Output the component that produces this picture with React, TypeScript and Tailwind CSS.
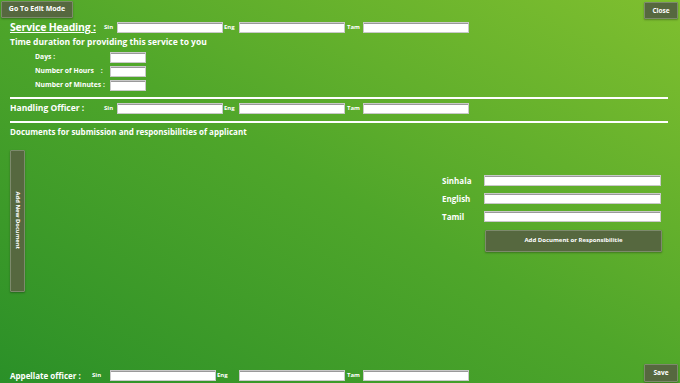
import React from 'react'

const font = { fontFamily: '"Open Sans", "Noto Sans", sans-serif' }

function Field({ w }: { w: string }) {
  return <input type="text" className={`${w} h-[11px] bg-white border border-[#c9c9c9] shadow-[inset_0_1px_0_#999] outline-none`} />
}

function LangRow({
  label,
  labelW,
  labelClass,
  sinW,
  engW,
}: {
  label: React.ReactNode
  labelW: string
  labelClass: string
  sinW: string
  engW: string
}) {
  return (
    <div className="flex items-center pl-[10px]">
      <div className={`${labelW} ${labelClass} text-white font-bold leading-none whitespace-nowrap`}>{label}</div>
      <span className={`${sinW} text-[6px] font-bold text-white`}>Sin</span>
      <Field w="w-[106px]" />
      <span className={`${engW} pl-[1px] text-[6px] font-bold text-white`}>Eng</span>
      <Field w="w-[106px]" />
      <span className="w-[18px] pl-[2px] text-[6px] font-bold text-white">Tam</span>
      <Field w="w-[106px]" />
    </div>
  )
}

function Duration({ label }: { label: string }) {
  return (
    <div className="flex items-center h-[14px] pl-[35px]">
      <span className="w-[75px] text-[6.8px] font-bold text-white whitespace-pre">{label}</span>
      <Field w="w-[36px]" />
    </div>
  )
}

const btn = 'bg-[#56683f] border border-[#7d8a6c] text-white font-bold shadow-[0_1px_2px_rgba(0,0,0,0.3)]'

export default function App() {
  return (
    <div style={font} className="h-[383px] w-full flex flex-col bg-gradient-to-tr from-[#2a9028] via-[#4fa62a] to-[#7fbf2f] overflow-hidden">
      <div className="flex justify-between pl-[1px] pr-[2px] pt-[1px]">
        <button className={`${btn} h-[17px] w-[72px] text-[7px] rounded-[1px]`}>Go To Edit Mode</button>
        <button className={`${btn} mt-[1px] h-[17px] w-[34px] text-[6.5px] rounded-[1px]`}>Close</button>
      </div>

      <div className="mt-[3px]">
        <LangRow
          label={<span className="underline">Service Heading :</span>}
          labelW="w-[94px]"
          labelClass="text-[10.5px] tracking-[-0.2px]"
          sinW="w-[13px]"
          engW="w-[16px]"
        />
      </div>

      <div className="pl-[10px] mt-[5px] text-[8.5px] font-bold text-white leading-none">
        Time duration for providing this service to you
      </div>

      <div className="mt-[4px]">
        <Duration label="Days :" />
        <Duration label="Number of Hours    :" />
        <Duration label="Number of Minutes :" />
      </div>

      <div className="mx-[10px] mr-[12px] mt-[4px] h-[2px] bg-white" />

      <div className="mt-[4px]">
        <LangRow
          label="Handling Officer :"
          labelW="w-[94px]"
          labelClass="text-[8.5px]"
          sinW="w-[13px]"
          engW="w-[16px]"
        />
      </div>

      <div className="mx-[10px] mr-[12px] mt-[7px] h-[2px] bg-white" />

      <div className="pl-[10px] mt-[5px] text-[8px] font-bold text-white leading-none">
        Documents for submission and responsibilities of applicant
      </div>

      <div className="flex-1 flex justify-between pl-[10px] pr-[18px] pt-[14px]">
        <button className={`${btn} w-[15px] h-[142px] rounded-[1px] flex items-center justify-center`}>
          <span className="rotate-90 whitespace-nowrap text-[5.8px]">Add New Document</span>
        </button>

        <div className="mt-[22px] flex flex-col">
          {['Sinhala', 'English', 'Tamil'].map((l) => (
            <div key={l} className="flex items-center h-[18px]">
              <span className="w-[42px] text-[8px] font-bold text-white">{l}</span>
              <Field w="w-[177px]" />
            </div>
          ))}
          <button className={`${btn} ml-[43px] mt-[4px] w-[177px] h-[22px] text-[6px] rounded-[1px]`}>
            Add Document or Responsibilitie
          </button>
        </div>
      </div>

      <div className="flex items-end justify-between pr-[2px] pb-[1px]">
        <div className="pb-[1px]">
          <LangRow
            label="Appellate officer :"
            labelW="w-[82px]"
            labelClass="text-[8px]"
            sinW="w-[18px]"
            engW="w-[23px]"
          />
        </div>
        <button className={`${btn} h-[18px] w-[34px] text-[6.5px] rounded-[1px]`}>Save</button>
      </div>
    </div>
  )
}
